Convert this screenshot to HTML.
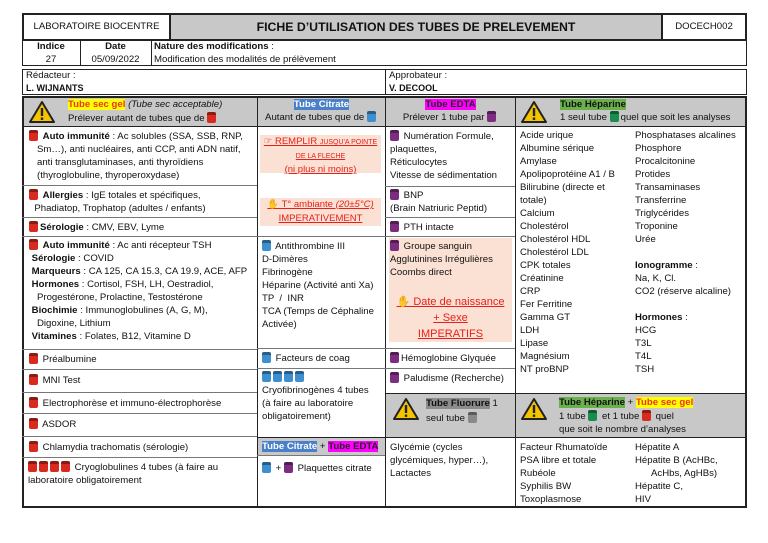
<!DOCTYPE html>
<html><head><meta charset="utf-8"><style>
*{margin:0;padding:0;box-sizing:border-box}
body{width:768px;height:543px;background:#fff;font-family:"Liberation Sans",sans-serif;font-size:9.6px;color:#111;position:relative;overflow:hidden;line-height:13px}
.a{position:absolute}
.bx{position:absolute;border:1px solid #222}
.hl{position:absolute;height:1px;background:#777}
.vl{position:absolute;width:1px;background:#222}
.t{display:inline-block;width:9px;height:11px;border-radius:2px;vertical-align:-2px;position:relative;margin-right:2px}
.t:before{content:"";position:absolute;left:0;right:0;top:0;height:3px;border-radius:2px 2px 0 0;background:rgba(0,0,0,.35)}
.r{background:#d82a1e}.b{background:#3d8fcf}.p{background:#7d2d80}.g{background:#1a8c4c}.gy{background:#8a8a8a}
.gray{background:#c8c8c8}
.yl{background:#ffff00;color:#e32;font-weight:bold}
.bl{background:#4a80c8;color:#fff;font-weight:bold}
.mg{background:#ff00ff;color:#222;font-weight:bold}
.gn{background:#6ab04c;color:#111;font-weight:bold}
.gf{background:#8c8c8c;color:#111;font-weight:bold}
.red{color:#e8201a;text-decoration:underline}
.pk{background:#fbe0d4}
b{font-weight:bold}
.c{text-align:center}
.in{padding-left:11px;text-indent:-11px}
</style></head><body>
<!-- header -->
<div class="bx" style="left:22px;top:13px;width:725px;height:28px;border-width:2px"></div>
<div class="a gray" style="left:170px;top:15px;width:492px;height:24px"></div>
<div class="vl" style="left:169px;top:13px;height:28px;width:2px"></div>
<div class="vl" style="left:661px;top:13px;height:28px;width:2px"></div>
<div class="a c" style="left:24px;top:20px;width:145px">LABORATOIRE BIOCENTRE</div>
<div class="a c" style="left:171px;top:19px;width:490px;font-size:12.3px;font-weight:bold;line-height:16px">FICHE D’UTILISATION DES TUBES DE PRELEVEMENT</div>
<div class="a c" style="left:663px;top:20px;width:82px">DOCECH002</div>
<div class="bx" style="left:22px;top:40px;width:725px;height:26px"></div>
<div class="vl" style="left:80px;top:40px;height:26px"></div>
<div class="vl" style="left:151px;top:40px;height:26px"></div>
<div class="a c" style="left:22px;top:40px;width:58px"><b>Indice</b><br>27</div>
<div class="a c" style="left:80px;top:40px;width:71px"><b>Date</b><br>05/09/2022</div>
<div class="a" style="left:154px;top:40px"><b>Nature des modifications</b> :<br>Modification des modalités de prélèvement</div>
<div class="bx" style="left:22px;top:69px;width:725px;height:26px"></div>
<div class="vl" style="left:385px;top:69px;height:26px"></div>
<div class="a" style="left:26px;top:69px">Rédacteur :<br><b style="font-size:9px">L. WIJNANTS</b></div>
<div class="a" style="left:389px;top:69px">Approbateur :<br><b style="font-size:9px">V. DECOOL</b></div>

<!-- main -->
<div class="bx" style="left:22px;top:96px;width:725px;height:412px;border-width:2px"></div>
<div class="a gray" style="left:24px;top:98px;width:721px;height:28px"></div>
<div class="hl" style="left:22px;top:126px;width:725px;background:#222"></div>
<div class="vl" style="left:257px;top:96px;height:412px"></div>
<div class="vl" style="left:385px;top:96px;height:412px"></div>
<div class="vl" style="left:515px;top:96px;height:412px"></div>

<svg class="a" style="left:28px;top:100px" width="28" height="24" viewBox="0 0 28 24"><path d="M14 2 L26 22 H2 Z" fill="#f5c400" stroke="#222" stroke-width="2" stroke-linejoin="round"/><rect x="12.8" y="8" width="2.4" height="8" fill="#222"/><rect x="12.8" y="17.5" width="2.4" height="2.4" fill="#222"/></svg>
<div class="a" style="left:68px;top:98px"><span class="yl">Tube sec gel</span> <i>(Tube sec acceptable)</i></div>
<div class="a" style="left:68px;top:112px">Prélever autant de tubes que de <span class="t r"></span></div>
<div class="a c" style="left:258px;top:98px;width:127px"><span class="bl">Tube Citrate</span><br>Autant de tubes que de <span class="t b"></span></div>
<div class="a c" style="left:386px;top:98px;width:129px"><span class="mg">Tube EDTA</span><br>Prélever 1 tube par <span class="t p"></span></div>
<svg class="a" style="left:520px;top:100px" width="28" height="24" viewBox="0 0 28 24"><path d="M14 2 L26 22 H2 Z" fill="#f5c400" stroke="#222" stroke-width="2" stroke-linejoin="round"/><rect x="12.8" y="8" width="2.4" height="8" fill="#222"/><rect x="12.8" y="17.5" width="2.4" height="2.4" fill="#222"/></svg>
<div class="a" style="left:560px;top:98px"><span class="gn">Tube Héparine</span><br>1 seul tube <span class="t g"></span>quel que soit les analyses</div>

<!-- col1 -->
<div class="hl" style="left:22px;top:185px;width:235px"></div>
<div class="hl" style="left:22px;top:217px;width:235px"></div>
<div class="hl" style="left:22px;top:236px;width:235px"></div>
<div class="hl" style="left:22px;top:349px;width:235px"></div>
<div class="hl" style="left:22px;top:369px;width:235px"></div>
<div class="hl" style="left:22px;top:392px;width:235px"></div>
<div class="hl" style="left:22px;top:413px;width:235px"></div>
<div class="hl" style="left:22px;top:436px;width:235px"></div>
<div class="hl" style="left:22px;top:457px;width:235px"></div>
<div class="a" style="left:29px;top:130px;width:228px"><span class="t r"></span> <b>Auto immunité</b> : Ac solubles (SSA, SSB, RNP,<br>&nbsp;&nbsp;&nbsp;Sm…), anti nucléaires, anti CCP, anti ADN natif,<br>&nbsp;&nbsp;&nbsp;anti transglutaminases, anti thyroïdiens<br>&nbsp;&nbsp;&nbsp;(thyroglobuline, thyroperoxydase)</div>
<div class="a" style="left:29px;top:189px"><span class="t r"></span> <b>Allergies</b> : IgE totales et spécifiques,<br>&nbsp;&nbsp;Phadiatop, Trophatop (adultes / enfants)</div>
<div class="a" style="left:29px;top:221px"><span class="t r"></span><b>Sérologie</b> : CMV, EBV, Lyme</div>
<div class="a" style="left:29px;top:239px;line-height:13px"><span class="t r"></span> <b>Auto immunité</b> : Ac anti récepteur TSH<br>&nbsp;<b>Sérologie</b> : COVID<br>&nbsp;<b>Marqueurs</b> : CA 125, CA 15.3, CA 19.9, ACE, AFP<br>&nbsp;<b>Hormones</b> : Cortisol, FSH, LH, Oestradiol,<br>&nbsp;&nbsp;&nbsp;Progestérone, Prolactine, Testostérone<br>&nbsp;<b>Biochimie</b> : Immunoglobulines (A, G, M),<br>&nbsp;&nbsp;&nbsp;Digoxine, Lithium<br>&nbsp;<b>Vitamines</b> : Folates, B12, Vitamine D</div>
<div class="a" style="left:29px;top:353px"><span class="t r"></span> Préalbumine</div>
<div class="a" style="left:29px;top:374px"><span class="t r"></span> MNI Test</div>
<div class="a" style="left:29px;top:397px"><span class="t r"></span> Electrophorèse et immuno-électrophorèse</div>
<div class="a" style="left:29px;top:418px"><span class="t r"></span> ASDOR</div>
<div class="a" style="left:29px;top:441px"><span class="t r"></span> Chlamydia trachomatis (sérologie)</div>
<div class="a" style="left:28px;top:461px;width:228px"><span class="t r"></span><span class="t r"></span><span class="t r"></span><span class="t r"></span> Cryoglobulines 4 tubes (à faire au laboratoire obligatoirement</div>

<!-- col2 -->
<div class="a pk c" style="left:260px;top:135px;width:121px;height:38px;font-size:9.5px;line-height:13px"><span class="red">☞ REMPLIR <span style="font-size:7px">JUSQU'A POINTE</span><br><span style="font-size:7px">DE LA FLECHE</span><br>(ni plus ni moins)</span></div>
<div class="a pk c" style="left:260px;top:198px;width:121px;height:28px;font-size:9.5px;line-height:14px"><span class="red">✋ T° ambiante <i>(20±5°C)</i><br>IMPERATIVEMENT</span></div>
<div class="hl" style="left:257px;top:236px;width:128px"></div>
<div class="hl" style="left:257px;top:348px;width:128px"></div>
<div class="hl" style="left:257px;top:368px;width:128px"></div>
<div class="a" style="left:262px;top:240px"><span class="t b"></span> Antithrombine III<br>D-Dimères<br>Fibrinogène<br>Héparine (Activité anti Xa)<br>TP &nbsp;/ &nbsp;INR<br>TCA (Temps de Céphaline<br>Activée)</div>
<div class="a" style="left:262px;top:352px"><span class="t b"></span> Facteurs de coag</div>
<div class="a" style="left:262px;top:371px"><span class="t b"></span><span class="t b"></span><span class="t b"></span><span class="t b"></span><br>Cryofibrinogènes 4 tubes<br>(à faire au laboratoire<br>obligatoirement)</div>
<div class="hl" style="left:257px;top:437px;width:128px;background:#222"></div>
<div class="a gray" style="left:258px;top:438px;width:127px;height:17px"></div>
<div class="hl" style="left:257px;top:455px;width:128px"></div>
<div class="a" style="left:262px;top:440px"><span class="bl">Tube Citrate</span> + <span class="mg">Tube EDTA</span></div>
<div class="a" style="left:262px;top:462px"><span class="t b"></span> + <span class="t p"></span> Plaquettes citrate</div>

<!-- col3 -->
<div class="hl" style="left:385px;top:186px;width:130px"></div>
<div class="hl" style="left:385px;top:217px;width:130px"></div>
<div class="hl" style="left:385px;top:236px;width:130px"></div>
<div class="hl" style="left:385px;top:348px;width:130px"></div>
<div class="hl" style="left:385px;top:368px;width:130px"></div>
<div class="a" style="left:390px;top:130px"><span class="t p"></span> Numération Formule,<br>plaquettes,<br>Réticulocytes<br>Vitesse de sédimentation</div>
<div class="a" style="left:390px;top:189px"><span class="t p"></span> BNP<br>(Brain Natriuric Peptid)</div>
<div class="a" style="left:390px;top:221px"><span class="t p"></span> PTH intacte</div>
<div class="a pk" style="left:389px;top:238px;width:123px;height:104px"></div>
<div class="a" style="left:390px;top:240px"><span class="t p"></span> Groupe sanguin<br>Agglutinines Irrégulières<br>Coombs direct</div>
<div class="a c" style="left:389px;top:294px;width:123px;font-size:11px;line-height:16px"><span class="red">✋ Date de naissance<br>+ Sexe<br>IMPERATIFS</span></div>
<div class="a" style="left:390px;top:352px"><span class="t p"></span>Hémoglobine Glyquée</div>
<div class="a" style="left:390px;top:372px"><span class="t p"></span> Paludisme (Recherche)</div>
<div class="hl" style="left:385px;top:393px;width:362px;background:#222"></div>
<div class="a gray" style="left:386px;top:394px;width:359px;height:43px"></div>
<div class="vl" style="left:515px;top:393px;height:45px"></div>
<div class="hl" style="left:385px;top:437px;width:362px;background:#222"></div>
<svg class="a" style="left:392px;top:397px" width="28" height="24" viewBox="0 0 28 24"><path d="M14 2 L26 22 H2 Z" fill="#f5c400" stroke="#222" stroke-width="2" stroke-linejoin="round"/><rect x="12.8" y="8" width="2.4" height="8" fill="#222"/><rect x="12.8" y="17.5" width="2.4" height="2.4" fill="#222"/></svg>
<div class="a" style="left:426px;top:396px;line-height:15px"><span class="gf">Tube Fluorure</span> 1<br>seul tube <span class="t gy"></span></div>
<div class="a" style="left:390px;top:441px">Glycémie (cycles<br>glycémiques, hyper…),<br>Lactactes</div>

<!-- col4 -->
<div class="a" style="left:520px;top:129px">Acide urique<br>Albumine sérique<br>Amylase<br>Apolipoprotéine A1 / B<br>Bilirubine (directe et<br>totale)<br>Calcium<br>Cholestérol<br>Cholestérol HDL<br>Cholestérol LDL<br>CPK totales<br>Créatinine<br>CRP<br>Fer Ferritine<br>Gamma GT<br>LDH<br>Lipase<br>Magnésium<br>NT proBNP</div>
<div class="a" style="left:635px;top:129px">Phosphatases alcalines<br>Phosphore<br>Procalcitonine<br>Protides<br>Transaminases<br>Transferrine<br>Triglycérides<br>Troponine<br>Urée<br><br><b>Ionogramme</b> :<br>Na, K, Cl.<br>CO2 (réserve alcaline)<br><br><b>Hormones</b> :<br>HCG<br>T3L<br>T4L<br>TSH</div>
<svg class="a" style="left:520px;top:397px" width="28" height="24" viewBox="0 0 28 24"><path d="M14 2 L26 22 H2 Z" fill="#f5c400" stroke="#222" stroke-width="2" stroke-linejoin="round"/><rect x="12.8" y="8" width="2.4" height="8" fill="#222"/><rect x="12.8" y="17.5" width="2.4" height="2.4" fill="#222"/></svg>
<div class="a" style="left:559px;top:396px;line-height:13.5px"><span class="gn">Tube Héparine</span> + <span class="yl">Tube sec gel</span><br>1 tube <span class="t g"></span> et 1 tube <span class="t r"></span> quel<br>que soit le nombre d’analyses</div>
<div class="a" style="left:520px;top:441px">Facteur Rhumatoïde<br>PSA libre et totale<br>Rubéole<br>Syphilis BW<br>Toxoplasmose</div>
<div class="a" style="left:635px;top:441px">Hépatite A<br>Hépatite B (AcHBc,<br>&nbsp;&nbsp;&nbsp;&nbsp;&nbsp;&nbsp;AcHbs, AgHBs)<br>Hépatite C,<br>HIV</div>
</body></html>
